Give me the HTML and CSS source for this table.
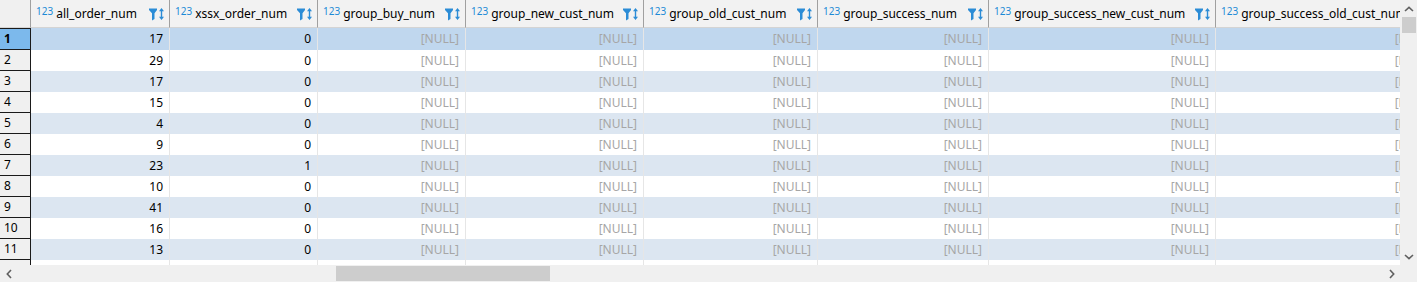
FILE: index.html
```html
<!DOCTYPE html>
<html lang="en">
<head>
    <meta charset="UTF-8">
    <title>Result Grid</title>
    <link rel="stylesheet" href="styles.css">
</head>
<body>
    <div class="grid-view">
        <div class="grid-body">
            <table class="result-table">
                <colgroup>
                    <col style="width: 31px">
                    <col style="width: 139px">
                    <col style="width: 148px">
                    <col style="width: 148px">
                    <col style="width: 178px">
                    <col style="width: 174px">
                    <col style="width: 171px">
                    <col style="width: 227px">
                    <col style="width: 224px">
                </colgroup>
                <thead>
                    <tr>
                        <th class="corner"></th>
                        <th><div class="col-head"><span class="type">123</span><span class="name">all_order_num</span><svg class="sort" width="17" height="16" viewBox="0 0 17 16"><path d="M1 2.5h8v1.5L6.5 7.2V13L4 14.6V7.2L1 4z"/><path d="M13.5 4v8" class="stem"/><path d="M11 5.2 13.5 2 16 5.2zM11 10.8 13.5 14 16 10.8z"/></svg></div></th>
                        <th><div class="col-head"><span class="type">123</span><span class="name">xssx_order_num</span><svg class="sort" width="17" height="16" viewBox="0 0 17 16"><path d="M1 2.5h8v1.5L6.5 7.2V13L4 14.6V7.2L1 4z"/><path d="M13.5 4v8" class="stem"/><path d="M11 5.2 13.5 2 16 5.2zM11 10.8 13.5 14 16 10.8z"/></svg></div></th>
                        <th><div class="col-head"><span class="type">123</span><span class="name">group_buy_num</span><svg class="sort" width="17" height="16" viewBox="0 0 17 16"><path d="M1 2.5h8v1.5L6.5 7.2V13L4 14.6V7.2L1 4z"/><path d="M13.5 4v8" class="stem"/><path d="M11 5.2 13.5 2 16 5.2zM11 10.8 13.5 14 16 10.8z"/></svg></div></th>
                        <th><div class="col-head"><span class="type">123</span><span class="name">group_new_cust_num</span><svg class="sort" width="17" height="16" viewBox="0 0 17 16"><path d="M1 2.5h8v1.5L6.5 7.2V13L4 14.6V7.2L1 4z"/><path d="M13.5 4v8" class="stem"/><path d="M11 5.2 13.5 2 16 5.2zM11 10.8 13.5 14 16 10.8z"/></svg></div></th>
                        <th><div class="col-head"><span class="type">123</span><span class="name">group_old_cust_num</span><svg class="sort" width="17" height="16" viewBox="0 0 17 16"><path d="M1 2.5h8v1.5L6.5 7.2V13L4 14.6V7.2L1 4z"/><path d="M13.5 4v8" class="stem"/><path d="M11 5.2 13.5 2 16 5.2zM11 10.8 13.5 14 16 10.8z"/></svg></div></th>
                        <th><div class="col-head"><span class="type">123</span><span class="name">group_success_num</span><svg class="sort" width="17" height="16" viewBox="0 0 17 16"><path d="M1 2.5h8v1.5L6.5 7.2V13L4 14.6V7.2L1 4z"/><path d="M13.5 4v8" class="stem"/><path d="M11 5.2 13.5 2 16 5.2zM11 10.8 13.5 14 16 10.8z"/></svg></div></th>
                        <th><div class="col-head"><span class="type">123</span><span class="name">group_success_new_cust_num</span><svg class="sort" width="17" height="16" viewBox="0 0 17 16"><path d="M1 2.5h8v1.5L6.5 7.2V13L4 14.6V7.2L1 4z"/><path d="M13.5 4v8" class="stem"/><path d="M11 5.2 13.5 2 16 5.2zM11 10.8 13.5 14 16 10.8z"/></svg></div></th>
                        <th><div class="col-head"><span class="type">123</span><span class="name">group_success_old_cust_num</span><svg class="sort" width="17" height="16" viewBox="0 0 17 16"><path d="M1 2.5h8v1.5L6.5 7.2V13L4 14.6V7.2L1 4z"/><path d="M13.5 4v8" class="stem"/><path d="M11 5.2 13.5 2 16 5.2zM11 10.8 13.5 14 16 10.8z"/></svg></div></th>
                    </tr>
                </thead>
                <tbody>
                    <tr class="selected"><td class="row-num">1</td><td>17</td><td>0</td><td class="null">[NULL]</td><td class="null">[NULL]</td><td class="null">[NULL]</td><td class="null">[NULL]</td><td class="null">[NULL]</td><td class="null">[NULL]</td></tr>
                    <tr><td class="row-num">2</td><td>29</td><td>0</td><td class="null">[NULL]</td><td class="null">[NULL]</td><td class="null">[NULL]</td><td class="null">[NULL]</td><td class="null">[NULL]</td><td class="null">[NULL]</td></tr>
                    <tr class="alt"><td class="row-num">3</td><td>17</td><td>0</td><td class="null">[NULL]</td><td class="null">[NULL]</td><td class="null">[NULL]</td><td class="null">[NULL]</td><td class="null">[NULL]</td><td class="null">[NULL]</td></tr>
                    <tr><td class="row-num">4</td><td>15</td><td>0</td><td class="null">[NULL]</td><td class="null">[NULL]</td><td class="null">[NULL]</td><td class="null">[NULL]</td><td class="null">[NULL]</td><td class="null">[NULL]</td></tr>
                    <tr class="alt"><td class="row-num">5</td><td>4</td><td>0</td><td class="null">[NULL]</td><td class="null">[NULL]</td><td class="null">[NULL]</td><td class="null">[NULL]</td><td class="null">[NULL]</td><td class="null">[NULL]</td></tr>
                    <tr><td class="row-num">6</td><td>9</td><td>0</td><td class="null">[NULL]</td><td class="null">[NULL]</td><td class="null">[NULL]</td><td class="null">[NULL]</td><td class="null">[NULL]</td><td class="null">[NULL]</td></tr>
                    <tr class="alt"><td class="row-num">7</td><td>23</td><td>1</td><td class="null">[NULL]</td><td class="null">[NULL]</td><td class="null">[NULL]</td><td class="null">[NULL]</td><td class="null">[NULL]</td><td class="null">[NULL]</td></tr>
                    <tr><td class="row-num">8</td><td>10</td><td>0</td><td class="null">[NULL]</td><td class="null">[NULL]</td><td class="null">[NULL]</td><td class="null">[NULL]</td><td class="null">[NULL]</td><td class="null">[NULL]</td></tr>
                    <tr class="alt"><td class="row-num">9</td><td>41</td><td>0</td><td class="null">[NULL]</td><td class="null">[NULL]</td><td class="null">[NULL]</td><td class="null">[NULL]</td><td class="null">[NULL]</td><td class="null">[NULL]</td></tr>
                    <tr><td class="row-num">10</td><td>16</td><td>0</td><td class="null">[NULL]</td><td class="null">[NULL]</td><td class="null">[NULL]</td><td class="null">[NULL]</td><td class="null">[NULL]</td><td class="null">[NULL]</td></tr>
                    <tr class="alt"><td class="row-num">11</td><td>13</td><td>0</td><td class="null">[NULL]</td><td class="null">[NULL]</td><td class="null">[NULL]</td><td class="null">[NULL]</td><td class="null">[NULL]</td><td class="null">[NULL]</td></tr>
                    <tr><td class="row-num"></td><td></td><td></td><td></td><td></td><td></td><td></td><td></td><td></td></tr>
                </tbody>
            </table>
        </div>

        <div class="vscroll">
            <div class="arrow"><svg width="10" height="6" viewBox="0 0 10 6"><path d="M1 5 5 1.3 9 5"/></svg></div>
            <div class="vthumb"></div>
            <div class="track"></div>
            <div class="arrow"><svg width="10" height="6" viewBox="0 0 10 6"><path d="M1 1 5 4.7 9 1"/></svg></div>
        </div>

        <div class="hscroll">
            <div class="arrow"><svg width="6" height="10" viewBox="0 0 6 10"><path d="M5 1 1.3 5 5 9"/></svg></div>
            <div class="hgap"></div>
            <div class="hthumb"></div>
            <div class="track"></div>
            <div class="arrow"><svg width="6" height="10" viewBox="0 0 6 10"><path d="M1 1 4.7 5 1 9"/></svg></div>
        </div>

        <div class="corner-box"></div>
    </div>
</body>
</html>
```

FILE: styles.css
```css
html, body {
    margin: 0;
    padding: 0;
    background: #f0f0f0;
    overflow: hidden;
}
.grid-view {
    display: grid;
    grid-template-columns: 1400px 17px;
    grid-template-rows: 265px 17px;
    width: 1417px;
    height: 282px;
    font-family: "Noto Sans", "Open Sans", sans-serif;
    font-size: 12px;
    color: #000;
}
.grid-body {
    overflow: hidden;
    background: #fff;
}
.result-table {
    border-collapse: separate;
    border-spacing: 0;
    table-layout: fixed;
    width: 1440px;
}
.result-table th,
.result-table td {
    box-sizing: border-box;
    padding: 0;
    white-space: nowrap;
    overflow: hidden;
}
.result-table th {
    height: 28px;
    background: #f2f2f2;
    border-right: 1px solid #a0a0a0;
    border-bottom: 1px solid #d4d4d4;
    font-weight: normal;
    text-align: left;
}
.result-table th.corner {
    background: #f0f0f0;
}
.col-head {
    display: flex;
    align-items: center;
    padding: 0 4px 0 5px;
}
.col-head .type {
    font-size: 10px;
    color: #1c8ad6;
    margin-right: 3px;
    margin-bottom: 5px;
}
.col-head .name {
    flex: 1;
    overflow: hidden;
}
.col-head .sort {
    flex: none;
    fill: #2b8cd6;
    margin-left: 4px;
}
.col-head .sort .stem {
    fill: none;
    stroke: #2b8cd6;
    stroke-width: 1.4;
}
.result-table td {
    height: 21px;
    padding: 0 6px;
    text-align: right;
    border-right: 1px solid #e6e6e6;
    line-height: 20px;
}
.result-table tr.alt td {
    background: #dce6f1;
}
.result-table tr.selected td {
    background: #c0d7ee;
}
.result-table td.null {
    color: #a6a6a6;
}
.result-table td.row-num {
    text-align: left;
    padding: 0 4px;
    background: #f0f0f0;
    border-right: 1px solid #1a1a1a;
    border-bottom: 1px solid #1a1a1a;
}
.result-table tr.alt td.row-num {
    background: #f0f0f0;
}
.result-table tr.selected td.row-num {
    background: #7cb9ec;
    font-weight: bold;
    border-top: 1px solid #1a1a1a;
}
.vscroll {
    display: flex;
    flex-direction: column;
    background: #f0f0f0;
}
.hscroll {
    display: flex;
    background: #f0f0f0;
}
.arrow {
    flex: none;
    width: 17px;
    height: 17px;
    display: flex;
    align-items: center;
    justify-content: center;
}
.arrow svg path {
    fill: none;
    stroke: #606060;
    stroke-width: 1.6;
}
.vthumb {
    flex: none;
    height: 16px;
    margin: 0 1px 0 2px;
    background: #cdcdcd;
}
.hgap {
    flex: none;
    width: 319px;
}
.hthumb {
    flex: none;
    width: 214px;
    margin: 1px 0;
    background: #cdcdcd;
}
.track {
    flex: 1;
}
.corner-box {
    background: #f0f0f0;
}
```
